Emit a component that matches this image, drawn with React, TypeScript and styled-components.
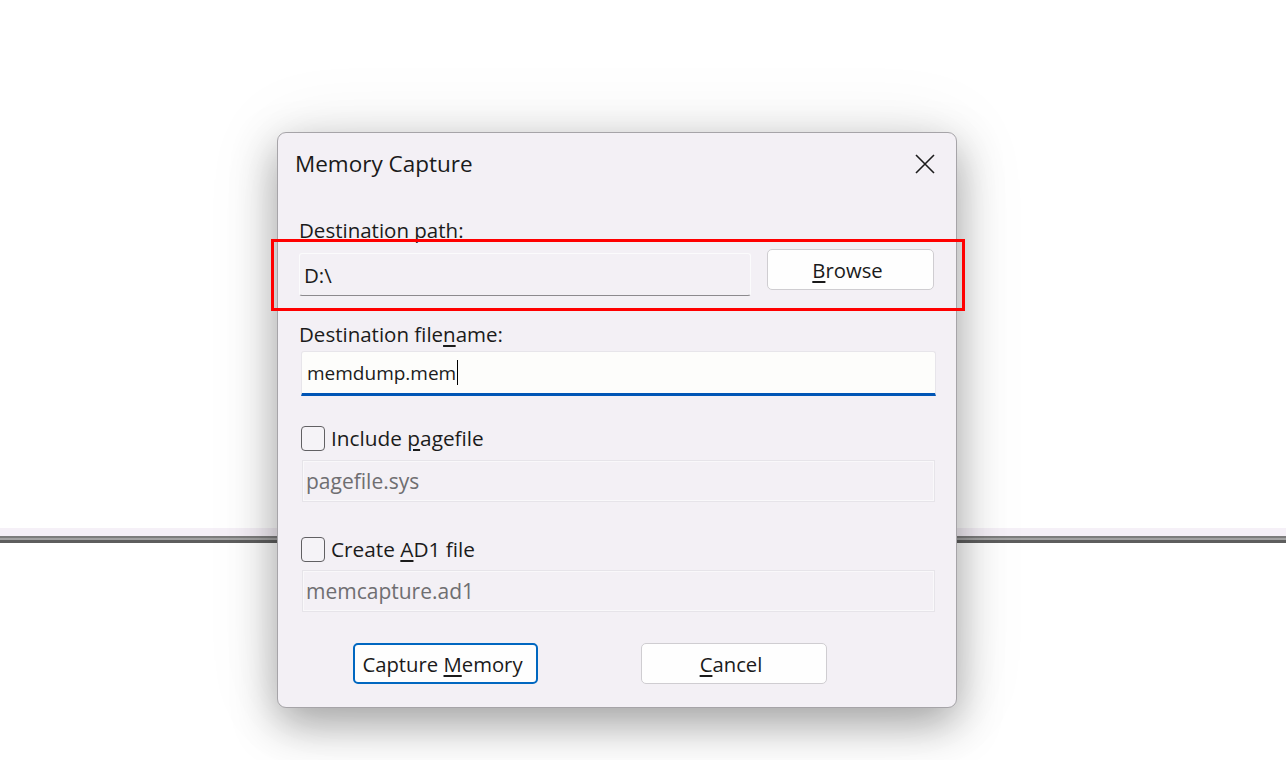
import * as React from 'react';
import styled, { createGlobalStyle } from 'styled-components';

const GlobalStyle = createGlobalStyle`
  html, body {
    margin: 0;
    padding: 0;
    background: #ffffff;
  }
  body {
    font-family: "Open Sans", "Noto Sans", sans-serif;
    color: #1b1b1b;
  }
`;

const Desktop = styled.div`
  position: relative;
  width: 100%;
  height: 760px;
  overflow: hidden;
  display: flex;
  flex-direction: column;
`;

const Spacer = styled.div`
  height: 528px;
`;

const Band = styled.div`
  height: 8px;
  background: #f5f0f7;
`;

const Rule = styled.div`
  height: 7px;
  background: linear-gradient(
    #7d7d7d 0, #7d7d7d 2px,
    #a3a3a3 2px, #a3a3a3 4px,
    #5e5e5e 4px, #5e5e5e 7px
  );
`;

const Dialog = styled.div`
  position: absolute;
  left: 277px;
  top: 132px;
  width: 680px;
  height: 576px;
  box-sizing: border-box;
  border: 1px solid #a6a4a8;
  border-radius: 9px;
  background: #f3f0f5;
  box-shadow: 0 16px 44px rgba(0, 0, 0, 0.34), 0 0 80px rgba(0, 0, 0, 0.08);
  display: flex;
  flex-direction: column;
`;

const TitleBar = styled.div`
  height: 61px;
  padding: 0 10px 0 17px;
  display: flex;
  align-items: center;
  justify-content: space-between;
`;

const Title = styled.div`
  font-size: 22.5px;
  color: #1a1a1a;
`;

const CloseButton = styled.button`
  width: 40px;
  height: 40px;
  margin-right: 1px;
  padding: 0;
  border: none;
  background: transparent;
  display: flex;
  align-items: center;
  justify-content: center;
  cursor: pointer;
`;

const Body = styled.div`
  padding: 0 21px;
  display: flex;
  flex-direction: column;
`;

const FieldLabel = styled.div<{ $top: number }>`
  margin-top: ${p => p.$top}px;
  font-size: 20.5px;
  line-height: 24px;
  height: 24px;
`;

const PathRow = styled.div`
  margin-top: 7px;
  width: 635px;
  height: 47px;
  display: flex;
  align-items: flex-start;
  justify-content: space-between;
`;

const PathInput = styled.div`
  margin-top: 4px;
  width: 452px;
  height: 43px;
  box-sizing: border-box;
  padding-left: 4px;
  border: 1px solid #fbfbfc;
  border-bottom: 1px solid #8c8a8e;
  border-radius: 3px;
  background: #f3f0f5;
  display: flex;
  align-items: center;
  font-size: 20.5px;
`;

const TextInput = styled.div`
  margin: 5px 0 0 2px;
  width: 635px;
  height: 45px;
  box-sizing: border-box;
  padding-left: 5px;
  border: 1px solid #e7e5ea;
  border-bottom: 3px solid #0055b5;
  border-radius: 3px 3px 0 0;
  background: #fdfdfb;
  display: flex;
  align-items: center;
  font-size: 19px;
`;

const Caret = styled.span`
  display: inline-block;
  width: 1px;
  height: 25px;
  margin-left: 1px;
  background: #000;
`;

const DisabledInput = styled.div<{ $top: number }>`
  margin: ${p => p.$top}px 0 0 3px;
  width: 633px;
  height: 42px;
  box-sizing: border-box;
  padding-left: 3px;
  border: 1px solid #e6e4e9;
  box-shadow: inset 0 0 0 1px #f9f8fa;
  background: #f3f0f5;
  display: flex;
  align-items: center;
  font-size: 21px;
  color: #6f6e71;
`;

const CheckRow = styled.label<{ $top: number }>`
  margin: ${p => p.$top}px 0 0 2px;
  height: 26px;
  display: flex;
  align-items: center;
  gap: 6px;
  font-size: 20.8px;
`;

const CheckBox = styled.span`
  width: 24px;
  height: 25px;
  box-sizing: border-box;
  border: 1.5px solid #616063;
  border-radius: 4px;
  background: #f5f3f7;
`;

const ButtonRow = styled.div`
  margin: 31px 0 0 54px;
  display: flex;
  gap: 103px;
`;

const PushButton = styled.button<{ $primary?: boolean }>`
  width: ${p => (p.$primary ? 185 : 186)}px;
  height: 41px;
  box-sizing: border-box;
  border-radius: 5px;
  border: ${p => (p.$primary ? '2px solid #0067c0' : '1px solid #cfcdd1')};
  background: #fefefe;
  font-family: inherit;
  font-size: 20.3px;
  color: #1a1a1a;
  padding: 0 6px 0 0;
  cursor: pointer;
`;

const BrowseButton = styled(PushButton)`
  width: 167px;
`;

const Key = styled.span`
  text-decoration: underline;
  text-underline-offset: 3px;
  text-decoration-thickness: 1.5px;
`;

const Highlight = styled.div`
  position: absolute;
  left: -7px;
  top: 106px;
  width: 694px;
  height: 72px;
  box-sizing: border-box;
  border: 3px solid #ff0000;
  pointer-events: none;
`;

const CloseIcon = () => (
  <svg width="22" height="22" viewBox="0 0 22 22">
    <path d="M2 2 L20 20 M20 2 L2 20" stroke="#1c1c1c" strokeWidth="1.6" fill="none" />
  </svg>
);

const App = (): React.ReactElement => (
  <>
    <GlobalStyle />
    <Desktop>
      <Spacer />
      <Band />
      <Rule />
      <Dialog>
        <TitleBar>
          <Title>Memory Capture</Title>
          <CloseButton aria-label="Close"><CloseIcon /></CloseButton>
        </TitleBar>
        <Body>
          <FieldLabel $top={24}>Destination path:</FieldLabel>
          <PathRow>
            <PathInput>D:\</PathInput>
            <BrowseButton><Key>B</Key>rowse</BrowseButton>
          </PathRow>
          <FieldLabel $top={26}>Destination file<Key>n</Key>ame:</FieldLabel>
          <TextInput>memdump.mem<Caret /></TextInput>
          <CheckRow $top={29}>
            <CheckBox />
            <span>Include <Key>p</Key>agefile</span>
          </CheckRow>
          <DisabledInput $top={9}>pagefile.sys</DisabledInput>
          <CheckRow $top={34}>
            <CheckBox />
            <span>Create <Key>A</Key>D1 file</span>
          </CheckRow>
          <DisabledInput $top={8}>memcapture.ad1</DisabledInput>
          <ButtonRow>
            <PushButton $primary>Capture <Key>M</Key>emory</PushButton>
            <PushButton><Key>C</Key>ancel</PushButton>
          </ButtonRow>
        </Body>
        <Highlight />
      </Dialog>
    </Desktop>
  </>
);

export default App;
